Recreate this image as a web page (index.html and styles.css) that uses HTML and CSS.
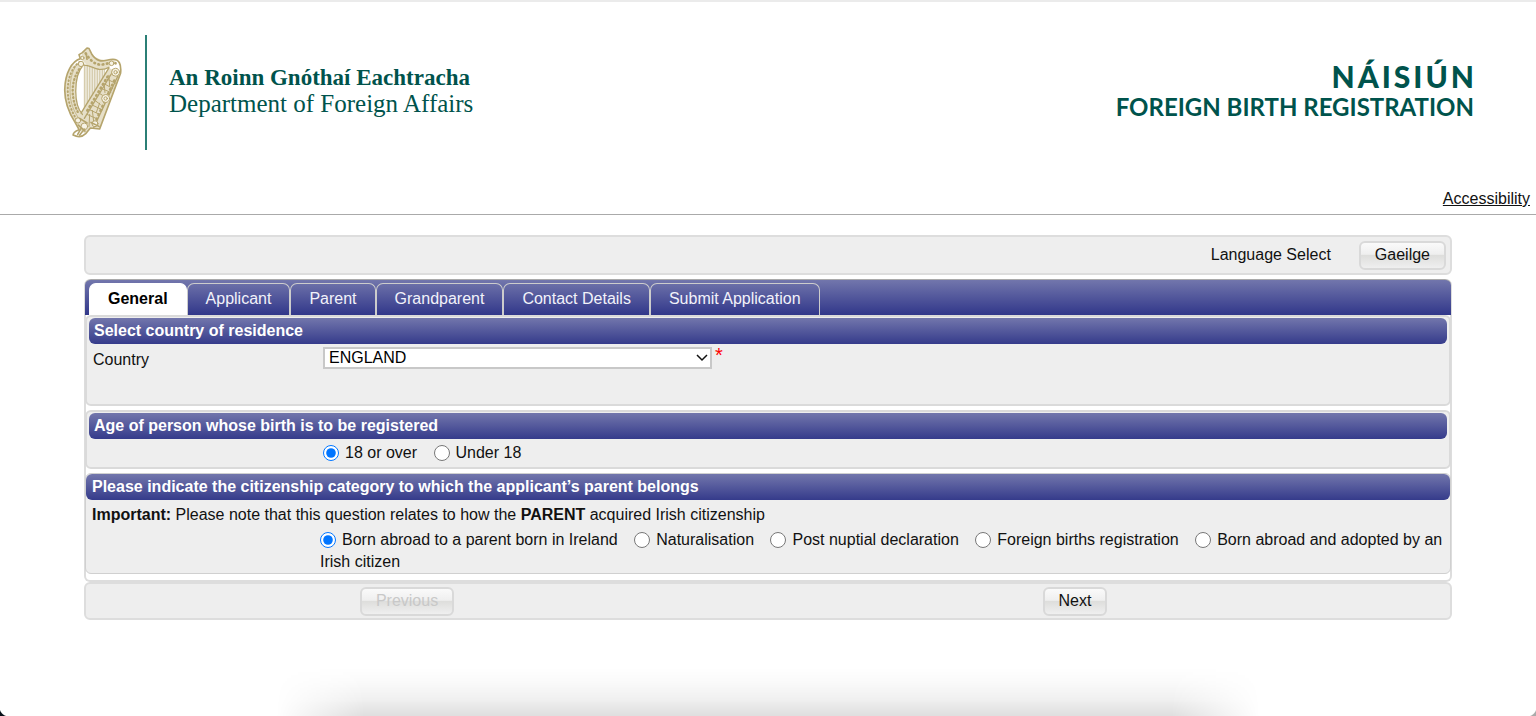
FILE: index.html
```html
<!DOCTYPE html>
<html lang="en">
<head>
  <meta charset="UTF-8">
  <title>Foreign Birth Registration</title>
  <link rel="stylesheet" href="styles.css">
</head>
<body>
  <header class="header">
    <div class="brand">
      <!-- harp -->
      <svg class="harp" viewBox="40 50 180 280" aria-hidden="true">
        <g fill="none" stroke="#b5a46c" stroke-linecap="round" stroke-linejoin="round">
          <g stroke-width="3" opacity="0.65">
            <path d="M104 108V236M109 108V232M114 108V226M119 111V220M124 114V214M129 116V208M134 118V201M139 119V194M144 120V188M149 120V182M154 120V175M159 120V168M164 120V160"/>
          </g>
          <!-- pale fill behind the ornament -->
          <path stroke="none" fill="#e6dfc8" d="M100 104C66 96 46 132 45 180C44 222 58 252 76 280L88 302L108 314L122 297L150 300L213 132L178 116L94 252C70 220 70 140 100 104ZM112 56L98 70L92 88L110 106C130 118 160 124 178 114L200 92C174 90 150 98 126 74Z"/>
          <path stroke-width="5" d="M112 56L98 70L88 76L92 88C66 96 46 132 45 180C44 222 58 252 76 280L88 302C78 306 70 312 70 318C84 325 98 324 108 314L122 297L150 300L213 132C216 104 208 90 190 90C174 90 162 98 150 94C138 90 132 84 126 74L118 58Z"/>
          <path stroke-width="4" d="M100 108C84 126 78 154 78 186C78 218 86 242 98 256M100 108C118 106 130 118 148 120C160 121 172 118 178 114M178 116L94 252M190 126L104 268M206 138L132 296"/>
          <path stroke-width="6" stroke-dasharray="2 9" d="M90 98C68 112 54 146 54 182C54 220 66 248 82 274"/>
          <path stroke-width="7" stroke-dasharray="2 9" d="M88 120C74 142 68 164 69 190C70 216 78 238 88 256"/>
          <path stroke-width="2" d="M82 104C64 130 60 160 61 190C62 222 72 246 86 266"/>
          <path stroke-width="8" stroke-dasharray="2 11" d="M108 72C122 94 136 106 152 106C168 107 184 96 198 102"/>
          <path stroke-width="8" stroke-dasharray="2 11" d="M174 142L112 246"/>
          <path stroke-width="8" stroke-dasharray="2 12" d="M194 154L140 272"/>
          <path stroke-width="3" d="M172 150L198 162M164 164L190 178M156 178L184 190M148 192L158 198M136 214L152 226M128 228L158 242M120 242L150 256M112 256L144 270M178 138L180 170M164 168L166 190M150 222L140 250M128 244L132 278M120 256L118 292"/>
          <g stroke-width="3" fill="#f6f2e4">
            <circle cx="198" cy="129" r="12"/><circle cx="198" cy="129" r="5"/>
            <circle cx="168" cy="208" r="12"/><circle cx="168" cy="208" r="5"/>
            <circle cx="85" cy="274" r="8"/><circle cx="94" cy="104" r="8"/>
            <circle cx="186" cy="102" r="7"/><circle cx="136" cy="284" r="9"/>
            <circle cx="104" cy="292" r="10"/><circle cx="98" cy="86" r="5"/>
          </g>
          <path stroke-width="5" d="M90 268L112 282M86 288L106 306M94 298L84 316M104 300L90 318M124 280L148 292M110 76L112 90"/>
        </g>
      </svg>
      <div class="brand-name">
        <strong>An Roinn Gnóthaí Eachtracha</strong>
        <span>Department of Foreign Affairs</span>
      </div>
    </div>
    <div class="app-title">
      <strong>NÁISIÚN</strong>
      <span>FOREIGN BIRTH REGISTRATION</span>
    </div>
  </header>
  <div class="access"><a href="#">Accessibility</a></div>

  <main class="container">
    <div class="bar lang-bar">
      <span>Language Select</span>
      <button class="btn" type="button">Gaeilge</button>
    </div>

    <form class="tab-panel">
      <nav class="tabs">
        <a class="tab active" href="#">General</a>
        <a class="tab" href="#">Applicant</a>
        <a class="tab" href="#">Parent</a>
        <a class="tab" href="#">Grandparent</a>
        <a class="tab" href="#">Contact Details</a>
        <a class="tab" href="#">Submit Application</a>
      </nav>

      <section class="section country">
        <h2>Select country of residence</h2>
        <div class="row">
          <label class="row-label" for="country">Country</label>
          <div class="select-wrap">
            <select id="country">
              <option>ENGLAND</option>
            </select>
            <svg class="arrow" viewBox="0 0 12 8" aria-hidden="true"><path d="M1 1L6 6L11 1"/></svg>
          </div>
          <span class="required">*</span>
        </div>
      </section>

      <section class="section age">
        <h2>Age of person whose birth is to be registered</h2>
        <div class="options">
          <input type="radio" name="age" id="over18" checked><label for="over18">18 or over</label>
          <input type="radio" name="age" id="under18"><label for="under18">Under 18</label>
        </div>
      </section>

      <section class="section category">
        <h2>Please indicate the citizenship category to which the applicant’s parent belongs</h2>
        <p><b>Important:</b> Please note that this question relates to how the <b>PARENT</b> acquired Irish citizenship</p>
        <div class="options">
          <input type="radio" name="category" id="cat1" checked><label for="cat1">Born abroad to a parent born in Ireland</label>
          <input type="radio" name="category" id="cat2"><label for="cat2">Naturalisation</label>
          <input type="radio" name="category" id="cat3"><label for="cat3">Post nuptial declaration</label>
          <input type="radio" name="category" id="cat4"><label for="cat4">Foreign births registration</label>
          <input type="radio" name="category" id="cat5"><label for="cat5">Born abroad and adopted by an Irish citizen</label>
        </div>
      </section>
    </form>

    <div class="bar nav-bar">
      <div><button class="btn" type="button" disabled>Previous</button></div>
      <div><button class="btn" type="button">Next</button></div>
    </div>
  </main>

  <div class="bottom-shadow"></div>
</body>
</html>
```
FILE: styles.css
```css
* { box-sizing: border-box; }
body {
  margin: 0; min-height: 100vh; position: relative;
  border-top: 2px solid #ebebeb;
  background:
    radial-gradient(circle at 100% 0, transparent 9px, #061018 10px) 0 100% / 9px 9px no-repeat,
    radial-gradient(circle at 0 0, transparent 9px, #aaa 10px) 100% 100% / 9px 9px no-repeat,
    #fff;
  font-family: "Liberation Sans", Arial, sans-serif; font-size: 16px; line-height: 22px;
  color: #111;
}

/* header */
.header {
  display: flex; justify-content: space-between; align-items: flex-start;
  padding: 33px 62px 0 63px; color: #00534c;
}
.brand { display: flex; align-items: center; }
.harp { width: 60px; height: 93px; margin-right: 22px; }
.brand-name {
  display: flex; flex-direction: column; justify-content: center;
  height: 115px; padding: 0 0 4px 22px; border-left: 2px solid #2b7f76;
  font-family: "Liberation Serif", serif; font-size: 25px; line-height: 26px;
}
.brand-name strong { font-size: 23px; }
.app-title {
  display: flex; flex-direction: column; align-items: flex-end;
  padding-top: 24px; font-family: Lato, sans-serif; font-weight: bold;
  font-size: 24px; line-height: 28px;
}
.app-title strong { font-size: 30px; line-height: 34px; letter-spacing: 3px; margin-right: -3px; }
.access {
  padding: 38px 6px 4px; text-align: right;
  border-bottom: 1px solid #aaa;
}
.access a { color: #111; }

.container { padding: 20px 84px 0; }

/* grey bars */
.bar {
  display: flex; align-items: center;
  border: 2px solid #ddd; border-radius: 6px; background: #eee;
}
.lang-bar { justify-content: flex-end; height: 40px; padding-right: 4px; gap: 28px; margin-bottom: 4px; }
.nav-bar { height: 38px; }
.nav-bar div { flex: 1; text-align: center; padding-right: 26px; }
.nav-bar div + div { padding-right: 54px; }
.btn {
  height: 29px; padding: 0 14px;
  border: 2px solid #d9d9d9; border-radius: 6px;
  background: linear-gradient(#fafafa, #efefef 45%, #dededc 50%, #efefef);
  font: inherit; color: #111;
}
.btn:disabled { color: #c8c8c8; }

/* tabs */
.tab-panel { border: 2px solid #ddd; border-top: 0; border-radius: 6px; padding-bottom: 6px; }
.tabs {
  display: flex; height: 36px; padding: 3px 4px 0; margin: 0 -1px;
  border-top: 1px solid #aaa; border-radius: 6px 6px 0 0;
  background: linear-gradient(#7276ac, #31378a);
}
.tab {
  padding: 4px 18px; border: 1px solid #ccc; border-bottom: 0;
  border-radius: 7px 7px 0 0;
  color: #f2f2fa; text-decoration: none;
}
.tab.active { background: #fff; color: #000; border-color: #fff; font-weight: bold; }

/* sections */
.section {
  border: 2px solid #dadada; border-radius: 6px; background: #eee;
  margin: 0 -1px 4px; padding: 1px 2px 0;
}
.section h2 {
  margin: 0; padding: 2px 5px; border-radius: 6px;
  font-size: 16px; line-height: 22px; color: #fff;
  background: linear-gradient(#7276ac, #353b8b);
}
.country { min-height: 91px; }
.row { display: flex; align-items: flex-start; padding: 3px 0 0 4px; }
.row-label { width: 230px; padding-top: 2px; }
.select-wrap { position: relative; width: 389px; }
select {
  display: block; appearance: none; width: 100%; height: 22px; padding: 0 4px;
  border: 2px solid #c8c8c8; border-radius: 0; background: #fff;
  font: inherit; line-height: 18px; color: #000;
}
.arrow { position: absolute; right: 4px; top: 7px; width: 12px; height: 8px; fill: none; stroke: #111; stroke-width: 1.5; }
.required { margin-left: 3px; color: red; font-size: 20px; line-height: 16px; }
.options { padding: 3px 0 0 234px; }
.options input { width: 16px; height: 16px; margin: 0 6px 0 0; vertical-align: -3px; }
.options label { margin-right: 12px; }
.age .options { height: 28px; }
.category { border-width: 1px; border-color: #d0d0d0; padding: 0; margin-bottom: 0; }
.category p { margin: 0; padding: 4px 6px 0; }
.category h2 { padding: 2px 6px; }

.bottom-shadow {
  position: absolute; left: 18%; right: 18%; bottom: 0; height: 48px;
  background: linear-gradient(transparent, rgba(0, 0, 0, 0.02) 30%, rgba(0, 0, 0, 0.06) 65%, rgba(0, 0, 0, 0.13));
  mask-image: linear-gradient(to right, transparent, #000 9%, #000 91%, transparent);
}
```
